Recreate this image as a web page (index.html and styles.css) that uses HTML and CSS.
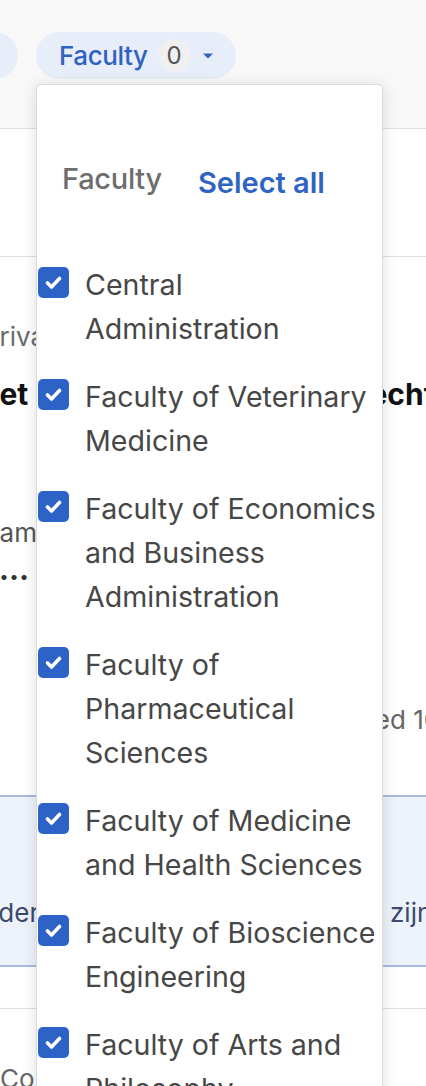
FILE: index.html
```html
<!DOCTYPE html>
<html lang="en">
<head>
<meta charset="utf-8">
<title>Faculty filter</title>
<link rel="stylesheet" href="styles.css">
</head>
<body>
<div class="page">
  <header class="filters">
    <div class="pill-row">
      <button class="pill pill-prev" type="button"><span class="pill-label">Type</span></button>
      <button class="pill" type="button">
        <span class="pill-label">Faculty</span>
        <span class="pill-count">0</span>
        <svg class="caret" width="10" height="6" viewBox="0 0 10 6" aria-hidden="true"><path d="M0 0.5h10L5 5.5z" fill="currentColor"/></svg>
      </button>
    </div>
  </header>
  <div class="sortbar"></div>
  <main class="results">
    <div class="cards">
      <article class="card card-left">
        <p class="card-meta">Private dataset</p>
        <h2 class="card-title">Het budget</h2>
        <p class="card-desc">Namens de faculteit</p>
        <p class="card-more">…</p>
      </article>
      <article class="card card-right">
        <h2 class="card-title">Utrecht</h2>
        <p class="card-date">Added 10 days ago</p>
      </article>
    </div>
    <div class="notice">
      <span class="notice-start">Zonder</span>
      <span class="notice-end">zijn</span>
    </div>
    <div class="next">
      <p class="next-meta">Collectie</p>
    </div>
  </main>

  <div class="dropdown" role="listbox">
    <div class="dd-head">
      <span class="dd-title">Faculty</span>
      <button class="dd-select" type="button">Select all</button>
    </div>
    <ul class="dd-list">
      <li class="dd-item"><span class="check"><svg viewBox="0 0 31 31" aria-hidden="true"><path d="M9.5 16l4 4L21.5 11.5" /></svg></span><span class="dd-text">Central Administration</span></li>
      <li class="dd-item"><span class="check"><svg viewBox="0 0 31 31" aria-hidden="true"><path d="M9.5 16l4 4L21.5 11.5" /></svg></span><span class="dd-text">Faculty of Veterinary Medicine</span></li>
      <li class="dd-item"><span class="check"><svg viewBox="0 0 31 31" aria-hidden="true"><path d="M9.5 16l4 4L21.5 11.5" /></svg></span><span class="dd-text">Faculty of Economics and Business Administration</span></li>
      <li class="dd-item"><span class="check"><svg viewBox="0 0 31 31" aria-hidden="true"><path d="M9.5 16l4 4L21.5 11.5" /></svg></span><span class="dd-text">Faculty of Pharmaceutical Sciences</span></li>
      <li class="dd-item"><span class="check"><svg viewBox="0 0 31 31" aria-hidden="true"><path d="M9.5 16l4 4L21.5 11.5" /></svg></span><span class="dd-text">Faculty of Medicine and Health Sciences</span></li>
      <li class="dd-item"><span class="check"><svg viewBox="0 0 31 31" aria-hidden="true"><path d="M9.5 16l4 4L21.5 11.5" /></svg></span><span class="dd-text">Faculty of Bioscience Engineering</span></li>
      <li class="dd-item"><span class="check"><svg viewBox="0 0 31 31" aria-hidden="true"><path d="M9.5 16l4 4L21.5 11.5" /></svg></span><span class="dd-text">Faculty of Arts and Philosophy</span></li>
    </ul>
  </div>
</div>
</body>
</html>
```

FILE: styles.css
```css
* { box-sizing: border-box; }
html, body { margin: 0; padding: 0; }
body {
  font-family: Inter, "Noto Sans", "Liberation Sans", sans-serif;
  background: #ffffff;
  color: #222;
}
.page {
  position: relative;
  width: 426px;
  height: 1086px;
  overflow: hidden;
}

/* top filter bar */
.filters {
  height: 129px;
  background: #f8f8f8;
  border-bottom: 1px solid #dedede;
  padding-top: 32px;
}
.pill-row {
  display: flex;
  gap: 18px;
  margin-left: -112px;
}
.pill {
  flex: none;
  height: 47px;
  border: 0;
  border-radius: 24px;
  background: #e7eef9;
  display: flex;
  align-items: center;
  padding: 0 23px;
  font-family: inherit;
  font-size: 26px;
  font-weight: 500;
  letter-spacing: -0.4px;
  color: #2f62c3;
  white-space: nowrap;
}
.pill-prev { width: 130px; }
.pill-count {
  width: 33px;
  height: 33px;
  border-radius: 50%;
  background: #f0f0f0;
  color: #555;
  font-size: 24px;
  font-weight: 400;
  letter-spacing: 0;
  display: flex;
  align-items: center;
  justify-content: center;
  margin-left: 10px;
}
.caret {
  margin-left: 12px;
  width: 10px;
  height: 6px;
}

.sortbar {
  height: 128px;
  border-bottom: 1px solid #dedede;
}

/* background results */
.results { font-size: 26px; }
.cards {
  display: flex;
  margin-left: -23px;
  height: 538px;
}
.card p, .card h2 { margin: 0; white-space: nowrap; }
.card-left { flex: none; width: 348px; padding-top: 62px; }
.card-meta { line-height: 36px; color: #6b6b6b; padding-left: 6px; }
.card .card-title {
  font-size: 30px;
  font-weight: 700;
  line-height: 40px;
  color: #111;
  margin-top: 19px;
}
.card .card-desc {
  margin-top: 100px;
  line-height: 37px;
  color: #555;
  padding-left: 3px;
}
.card-more {
  line-height: 37px;
  color: #333;
  font-size: 30px;
  font-weight: 700;
  padding-left: 22px;
}
.card-right { flex: 1; min-width: 0; padding-top: 98px; }
.card .card-date {
  margin-top: 288px;
  line-height: 36px;
  color: #666;
}

.notice {
  height: 172px;
  background: #eef2fa;
  border-top: 2px solid #a7bbe0;
  border-bottom: 2px solid #a7bbe0;
  display: flex;
  align-items: flex-end;
  justify-content: space-between;
  padding-bottom: 34px;
  color: #3b4a6a;
  line-height: 36px;
  white-space: nowrap;
}
.notice-start { margin-left: -49px; }
.notice-end { width: 36px; }

.next {
  margin-top: 41px;
  border-top: 1px solid #dedede;
  padding-top: 52px;
}
.next-meta { margin: 0; color: #666; line-height: 36px; white-space: nowrap; }

/* dropdown */
.dropdown {
  position: absolute;
  top: 84px;
  left: 36px;
  width: 347px;
  height: 1040px;
  background: #fff;
  border: 1px solid #dadada;
  border-radius: 5px;
  box-shadow: 0 2px 16px rgba(0, 0, 0, 0.13);
  padding-left: 1px;
}
.dd-head {
  display: flex;
  align-items: flex-start;
  gap: 36px;
  padding: 72px 0 0 24px;
  height: 178px;
}
.dd-title {
  font-size: 29px;
  font-weight: 500;
  letter-spacing: -0.3px;
  line-height: 44px;
  color: #6e6e6e;
}
.dd-select {
  border: 0;
  background: none;
  padding: 0;
  margin-top: 4px;
  font-family: inherit;
  font-size: 29px;
  font-weight: 600;
  line-height: 44px;
  color: #2f64c5;
}
.dd-list {
  list-style: none;
  margin: 0;
  padding: 0;
  display: flex;
  flex-direction: column;
  gap: 24px;
}
.dd-item {
  display: flex;
  align-items: flex-start;
  gap: 16px;
}
.check {
  flex: none;
  width: 31px;
  height: 31px;
  margin-top: 4px;
  border-radius: 5px;
  background: #2d62c6;
  display: flex;
}
.check svg {
  width: 31px;
  height: 31px;
  fill: none;
  stroke: #fff;
  stroke-width: 3.6;
  stroke-linecap: round;
  stroke-linejoin: round;
}
.dd-text {
  font-size: 28.6px;
  line-height: 44px;
  color: #474747;
  width: 296px;
}
```
